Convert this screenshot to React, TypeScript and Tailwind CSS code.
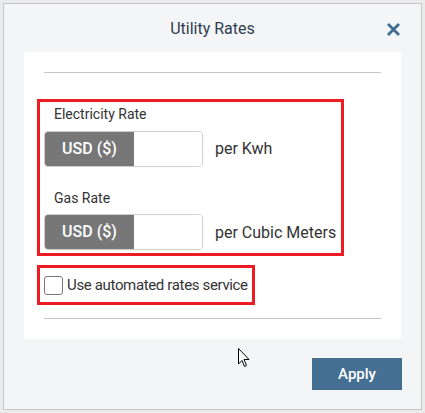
import React from "react";

export default function App() {
  return (
    <div className="w-[425px] h-[413px] bg-[#ebebeb] pt-[3px] pl-[3px] overflow-hidden relative" style={{ fontFamily: "Roboto, 'Liberation Sans', sans-serif" }}>
      <div className="w-[419px] h-[407px] border border-[#c6c6c6] bg-[#f4f5f7] flex flex-col">
        <div className="h-[48px] relative flex items-center justify-center">
          <span className="text-[16px] text-[#2e3d4f] leading-none mt-[1px]">Utility Rates</span>
          <svg className="absolute left-[382px] top-[18px]" width="15" height="15" viewBox="0 0 15 15">
            <path d="M2 2 L13 13 M13 2 L2 13" stroke="#3e6b93" strokeWidth="2.8" strokeLinecap="butt" />
          </svg>
        </div>
        <div className="ml-[20px] w-[377px] bg-white pt-[20px] pb-[20px] px-[20px]">
          <div className="h-px bg-[#c4c4c4]" />
          <div className="mt-[26px] -ml-[7px] w-[307px] border-[3px] border-[#ed1c24] pt-[2px] pb-[3px] pl-[4px]">
            <div className="pl-[10px] text-[14px] leading-[20px] text-[#333]">Electricity Rate</div>
            <div className="mt-[7px] flex items-center">
              <div className="w-[159px] h-[36px] rounded-[4px] border border-[#cfcfcf] flex overflow-hidden">
                <div className="w-[89px] bg-[#777777] flex items-center justify-center text-white text-[16px] font-medium">USD ($)</div>
                <div className="flex-1 bg-white" />
              </div>
              <span className="ml-[12px] text-[16px] text-[#333]">per Kwh</span>
            </div>
            <div className="mt-[21px] pl-[10px] text-[14px] leading-[20px] text-[#333]">Gas Rate</div>
            <div className="mt-[6px] flex items-center">
              <div className="w-[159px] h-[36px] rounded-[4px] border border-[#cfcfcf] flex overflow-hidden">
                <div className="w-[89px] bg-[#777777] flex items-center justify-center text-white text-[16px] font-medium">USD ($)</div>
                <div className="flex-1 bg-white" />
              </div>
              <span className="ml-[12px] mt-[2px] text-[16px] text-[#333]">per Cubic Meters</span>
            </div>
          </div>
          <div className="mt-[9px] -ml-[7px] w-[218px] h-[40px] border-[3px] border-[#ed1c24] pl-[4px] flex items-center">
            <div className="shrink-0 w-[19px] h-[19px] rounded-[3px] border border-[#777] bg-white" />
            <span className="ml-[4px] text-[15px] tracking-[-0.35px] text-[#333] whitespace-nowrap">Use automated rates service</span>
          </div>
          <div className="mt-[13px] h-px bg-[#c4c4c4]" />
        </div>
        <div className="flex justify-end pr-[19px] mt-[19px]">
          <button className="w-[90px] h-[32px] bg-[#456f92] text-white text-[15px] font-medium">Apply</button>
        </div>
      </div>
      <svg className="absolute left-[238px] top-[348px]" width="13" height="20" viewBox="0 0 13 20">
        <path d="M0.5 0.5 L0.5 16 L4 12.5 L6.5 18.5 L8.5 17.5 L6 11.5 L11 11.5 Z" fill="white" stroke="black" strokeWidth="1" strokeLinejoin="round" />
      </svg>
    </div>
  );
}
